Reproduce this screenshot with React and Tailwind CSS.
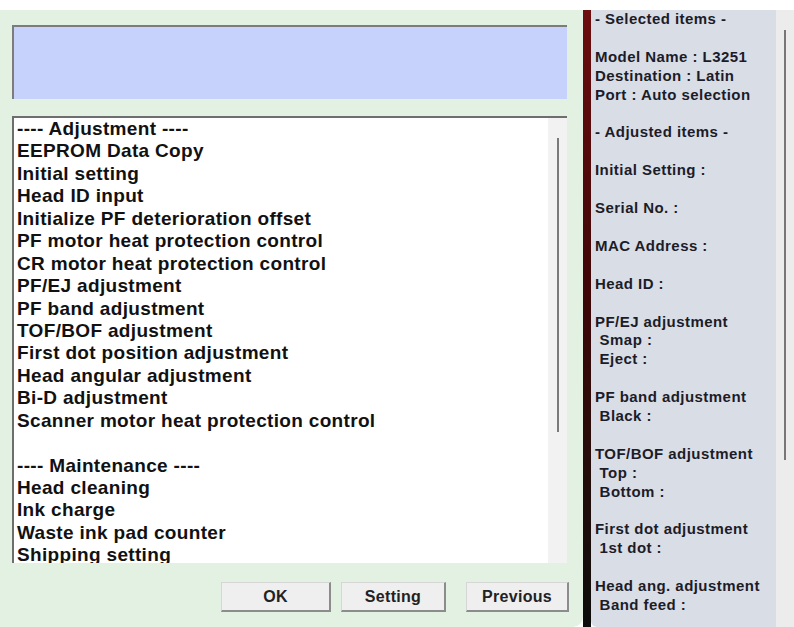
import React from "react";

const menu = [
  "---- Adjustment ----",
  "EEPROM Data Copy",
  "Initial setting",
  "Head ID input",
  "Initialize PF deterioration offset",
  "PF motor heat protection control",
  "CR motor heat protection control",
  "PF/EJ adjustment",
  "PF band adjustment",
  "TOF/BOF adjustment",
  "First dot position adjustment",
  "Head angular adjustment",
  "Bi-D adjustment",
  "Scanner motor heat protection control",
  "",
  "---- Maintenance ----",
  "Head cleaning",
  "Ink charge",
  "Waste ink pad counter",
  "Shipping setting",
];

const status = [
  "- Selected items -",
  "",
  "Model Name : L3251",
  "Destination : Latin",
  "Port : Auto selection",
  "",
  "- Adjusted items -",
  "",
  "Initial Setting :",
  "",
  "Serial No. :",
  "",
  "MAC Address :",
  "",
  "Head ID :",
  "",
  "PF/EJ adjustment",
  " Smap :",
  " Eject :",
  "",
  "PF band adjustment",
  " Black :",
  "",
  "TOF/BOF adjustment",
  " Top :",
  " Bottom :",
  "",
  "First dot adjustment",
  " 1st dot :",
  "",
  "Head ang. adjustment",
  " Band feed :",
];

const Button = ({ label, className }) => (
  <button
    className={`h-[30px] bg-[#efefef] border border-[#d6d6d6] border-r-2 border-b-2 border-r-[#8c8c8c] border-b-[#8c8c8c] text-[16px] font-bold tracking-[0.3px] text-[#222] ${className}`}
  >
    {label}
  </button>
);

const App = () => {
  return (
    <div
      className="w-[794px] h-[627px] flex flex-col bg-white overflow-hidden"
      style={{ fontFamily: '"Liberation Sans", Arial, sans-serif' }}
    >
      <div className="h-[10px] shrink-0 bg-white" />
      <div className="flex flex-1 min-h-0">
        {/* left panel */}
        <div className="w-[583px] shrink-0 bg-[#e3f1e3] rounded-br-[10px] flex flex-col pl-[12px]">
          <div className="mt-[15px] w-[555px] h-[74px] bg-[#c6d2fb] border-t-2 border-l-2 border-[#7c7c7c]" />
          <div className="mt-[17px] w-[555px] h-[447px] bg-white border-t-2 border-l-2 border-[#6e6e6e] flex overflow-hidden">
            <div className="flex-1 pl-[3px] text-[19px] leading-[22.45px] font-bold tracking-[0.33px] text-[#111] whitespace-pre">
              {menu.map((m, i) => (
                <div key={i} className="h-[22.45px]">
                  {m}
                </div>
              ))}
            </div>
            <div className="w-[19px] bg-[#f2f2f2] flex justify-center pt-[20px]">
              <div className="w-[2px] h-[294px] bg-[#7a7a7a]" />
            </div>
          </div>
          <div className="mt-[19px] flex">
            <Button label="OK" className="ml-[209px] w-[110px]" />
            <Button label="Setting" className="ml-[10px] w-[105px]" />
            <Button label="Previous" className="ml-[20px] w-[103px]" />
          </div>
        </div>
        {/* divider */}
        <div className="w-[8px] shrink-0 bg-gradient-to-b from-[#6c0d0f] via-[#3a0607] to-[#0c0c0c]" />
        {/* right panel */}
        <div className="w-[185px] shrink-0 bg-[#d9dde6] rounded-bl-[6px] pl-[4px] text-[15px] leading-[18.92px] font-bold tracking-[0.45px] text-[#1c1c28] whitespace-pre overflow-hidden">
          {status.map((s, i) => (
            <div key={i} className="h-[18.92px]">
              {s}
            </div>
          ))}
        </div>
        {/* scrollbar */}
        <div className="flex-1 bg-[#ececec] flex justify-center pt-[20px]">
          <div className="w-[2px] h-[430px] bg-[#777]" />
        </div>
      </div>
    </div>
  );
};

export default App;
